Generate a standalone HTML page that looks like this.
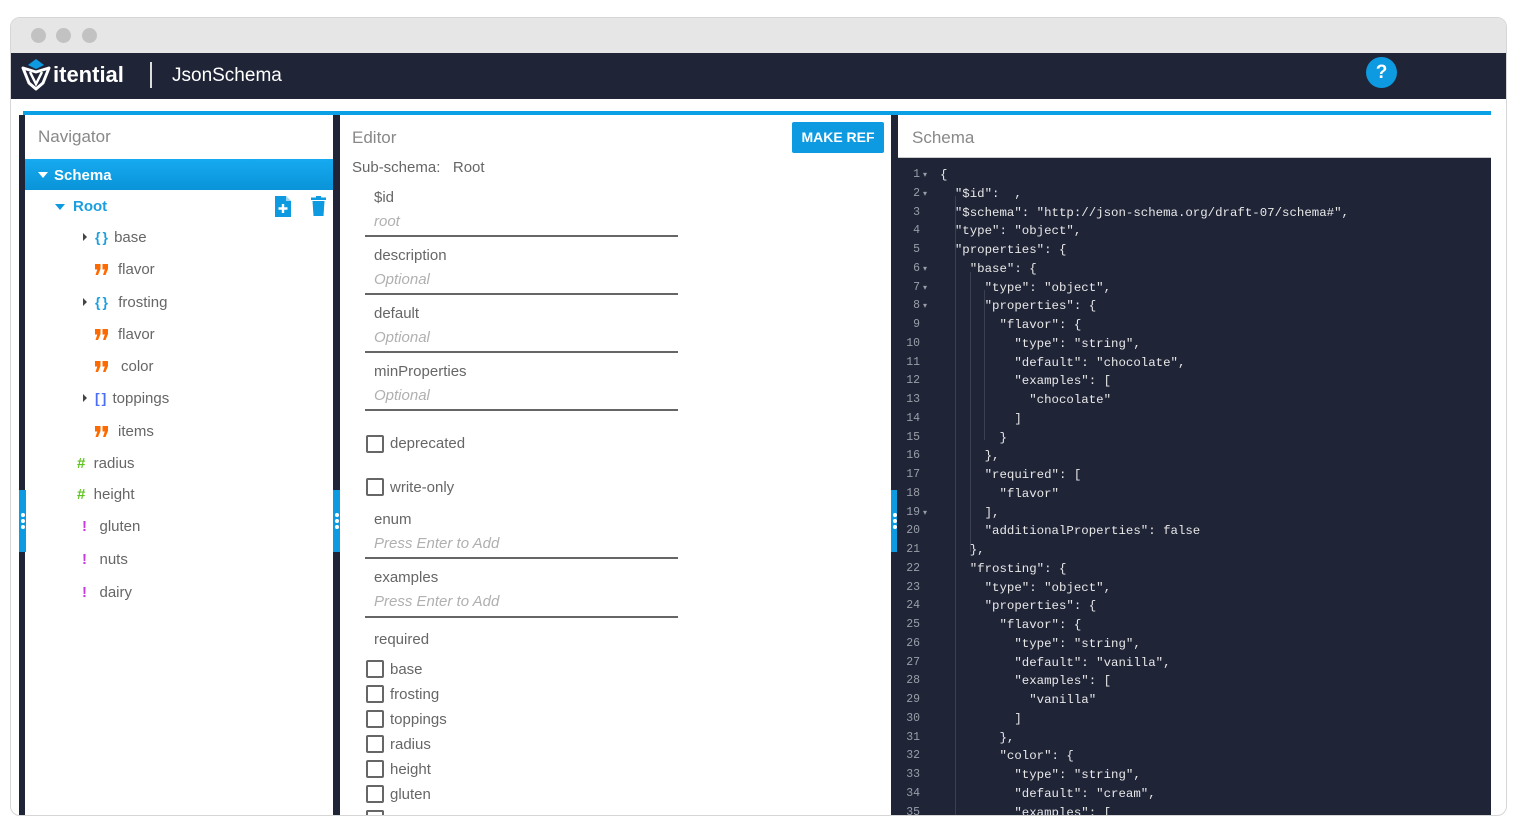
<!DOCTYPE html>
<html><head><meta charset="utf-8"><style>
*{margin:0;padding:0;box-sizing:border-box}
body{width:1536px;height:829px;background:#fff;position:relative;overflow:hidden;font-family:"Liberation Sans",sans-serif;color:#555}
.a{position:absolute}
.win{left:10px;top:17px;width:1497px;height:799px;border:1px solid #d6d6d6;border-radius:10px;background:#fff;overflow:hidden}
.tb{left:0;top:0;width:100%;height:35px;background:#e6e6e6}
.dot{width:15px;height:15px;border-radius:50%;background:#c2c2c2;top:10px}
.hd{left:0;top:35px;width:100%;height:46px;background:#1f2437}
.it{position:absolute;font-size:15px;color:#666;white-space:nowrap}
.br{color:#1a9fe0;font-weight:bold;font-size:14px;letter-spacing:2px}
.tri{display:inline-block;width:0;height:0;border-left:4px solid #444;border-top:4px solid transparent;border-bottom:4px solid transparent;margin-right:8px;vertical-align:1px}
.qi{position:absolute;left:95px;width:14px;height:11px}
.lbl{position:absolute;left:374px;font-size:15px;color:#666}
.ph{position:absolute;left:374px;font-size:15px;color:#b0b0b0;font-style:italic}
.ul{position:absolute;left:365px;width:313px;height:2px;background:#666}
.cb{position:absolute;left:366px;width:18px;height:18px;border:2px solid #666;border-radius:2px}
.cl{position:absolute;left:390px;font-size:15px;color:#666}
pre{font-family:"Liberation Mono",monospace;font-size:12.4px;line-height:18.75px;color:#e8e8e8;white-space:pre}
.ln{font-family:"Liberation Mono",monospace;font-size:11.5px;line-height:18.75px;color:#9a9ea8;text-align:right;white-space:pre}
.grip{width:7px;height:62px;background:#0d9ae0}
.grip i{position:absolute;left:1.5px;width:4px;height:4px;border-radius:50%;background:#fff}
</style></head><body>
<svg width="0" height="0" style="position:absolute"><defs><symbol id="q" viewBox="0 0 14 11"><path d="M0 0 H5.5 V5 L3 11 H0.5 L2.3 5.5 H0 Z M7.5 0 H13 V5 L10.5 11 H8 L9.8 5.5 H7.5 Z" fill="#ff6a00"/></symbol></defs></svg>
<div class="a win">
 <div class="a tb"></div>
 <div class="a dot" style="left:20px"></div><div class="a dot" style="left:45px"></div><div class="a dot" style="left:71px"></div>
 <div class="a hd"></div>
</div>
<svg class="a" style="left:20px;top:57px" width="32" height="34" viewBox="0 0 32 34">
<path d="M8 8 L16 2 L24 8 L16 12 Z" fill="#0d9ae0"/>
<path d="M3 11 L9 26 L16 32 L23 26 L29 11 L16 15 Z" fill="none" stroke="#fff" stroke-width="3" stroke-linejoin="round"/>
<path d="M10 15 L16 27 L22 15" fill="none" stroke="#fff" stroke-width="2.5"/>
</svg>
<div class="a" style="left:53px;top:62px;font-size:22px;font-weight:bold;color:#fff">itential</div>
<div class="a" style="left:150px;top:62px;width:2px;height:26px;background:#ddd"></div>
<div class="a" style="left:172px;top:65px;font-size:19px;color:#fff">JsonSchema</div>
<div class="a" style="left:1366px;top:57px;width:31px;height:31px;border-radius:50%;background:#0d9ae0;color:#fff;font-size:19px;text-align:center;line-height:31px;font-weight:bold">?</div>

<div class="a" style="left:23px;top:111px;width:1468px;height:4px;background:#0aa0e6"></div>
<div class="a" style="left:19px;top:115px;width:1472px;height:700px;background:#1f2437"></div>
<div class="a" style="left:25px;top:115px;width:308px;height:700px;background:#fff"></div>
<div class="a grip" style="left:19px;top:490px"><i style="top:23px"></i><i style="top:29px"></i><i style="top:35px"></i></div>
<div class="a grip" style="left:333px;top:490px"><i style="top:23px"></i><i style="top:29px"></i><i style="top:35px"></i></div>
<div class="a grip" style="left:891px;top:490px;width:6px"><i style="top:23px"></i><i style="top:29px"></i><i style="top:35px"></i></div>
<div class="a" style="left:38px;top:127px;font-size:17px;color:#888">Navigator</div>
<div class="a" style="left:25px;top:159px;width:308px;height:31px;background:linear-gradient(#16aaf0,#0a93d8)"></div>
<div class="a" style="left:38px;top:172px;width:0;height:0;border-top:6px solid #fff;border-left:5px solid transparent;border-right:5px solid transparent"></div>
<div class="a" style="left:54px;top:167px;font-size:15px;font-weight:bold;color:#fff">Schema</div>
<div class="a" style="left:55px;top:204px;width:0;height:0;border-top:6px solid #0d9ae0;border-left:5px solid transparent;border-right:5px solid transparent"></div>
<div class="a" style="left:73px;top:198px;font-size:15px;font-weight:bold;color:#1a9fe0">Root</div>
<svg class="a" style="left:274px;top:196px" width="18" height="21" viewBox="0 0 18 21"><path d="M1 0 H12 L17 5 V21 H1 Z" fill="#0d9ae0"/><path d="M12 0 V5 H17" fill="#fff" opacity=".6"/><path d="M9 8 V17 M4.5 12.5 H13.5" stroke="#fff" stroke-width="2.4"/></svg>
<svg class="a" style="left:311px;top:196px" width="15" height="20" viewBox="0 0 15 20"><rect x="0" y="1.5" width="15" height="2.5" fill="#0d9ae0"/><rect x="5" y="0" width="5" height="2" fill="#0d9ae0"/><path d="M1.5 5 H13.5 L12.5 20 H2.5 Z" fill="#0d9ae0"/></svg>

<div class="it" style="left:83px;top:229px"><span class="tri"></span><span class="br">{}</span> base</div>
<svg class="qi" style="top:264px"><use href="#q"/></svg><div class="it" style="left:118px;top:261px">flavor</div>
<div class="it" style="left:83px;top:294px"><span class="tri"></span><span class="br">{}</span>&nbsp; frosting</div>
<svg class="qi" style="top:329px"><use href="#q"/></svg><div class="it" style="left:118px;top:326px">flavor</div>
<svg class="qi" style="top:361px"><use href="#q"/></svg><div class="it" style="left:121px;top:358px">color</div>
<div class="it" style="left:83px;top:390px"><span class="tri"></span><span class="br" style="color:#4c6ef5">[]</span>&nbsp;toppings</div>
<svg class="qi" style="top:426px"><use href="#q"/></svg><div class="it" style="left:118px;top:423px">items</div>
<div class="it" style="left:77px;top:455px"><b style="color:#5fc31f">#</b>&nbsp; radius</div>
<div class="it" style="left:77px;top:486px"><b style="color:#5fc31f">#</b>&nbsp; height</div>
<div class="it" style="left:82px;top:518px"><b style="color:#c43ce0">!</b>&nbsp;&nbsp; gluten</div>
<div class="it" style="left:82px;top:551px"><b style="color:#c43ce0">!</b>&nbsp;&nbsp; nuts</div>
<div class="it" style="left:82px;top:584px"><b style="color:#c43ce0">!</b>&nbsp;&nbsp; dairy</div>

<div class="a" style="left:340px;top:115px;width:551px;height:700px;background:#fff"></div>
<div class="a" style="left:352px;top:128px;font-size:17px;color:#888">Editor</div>
<div class="a" style="left:792px;top:122px;width:92px;height:31px;background:#0d9ae0;border-radius:2px;color:#fff;font-size:14px;font-weight:bold;text-align:center;line-height:31px">MAKE REF</div>
<div class="a" style="left:352px;top:159px;font-size:15px;color:#666">Sub-schema:&nbsp;&nbsp; Root</div>
<div class="lbl" style="top:189px">$id</div><div class="ph" style="top:213px">root</div><div class="ul" style="top:235px"></div>
<div class="lbl" style="top:247px">description</div><div class="ph" style="top:271px">Optional</div><div class="ul" style="top:293px"></div>
<div class="lbl" style="top:305px">default</div><div class="ph" style="top:329px">Optional</div><div class="ul" style="top:351px"></div>
<div class="lbl" style="top:363px">minProperties</div><div class="ph" style="top:387px">Optional</div><div class="ul" style="top:409px"></div>
<div class="cb" style="top:435px"></div><div class="cl" style="top:435px">deprecated</div>
<div class="cb" style="top:478px"></div><div class="cl" style="top:479px">write-only</div>
<div class="lbl" style="top:511px">enum</div><div class="ph" style="top:535px">Press Enter to Add</div><div class="ul" style="top:557px"></div>
<div class="lbl" style="top:569px">examples</div><div class="ph" style="top:593px">Press Enter to Add</div><div class="ul" style="top:616px"></div>
<div class="lbl" style="top:631px">required</div>
<div class="cb" style="top:660px"></div><div class="cl" style="top:661px">base</div>
<div class="cb" style="top:685px"></div><div class="cl" style="top:686px">frosting</div>
<div class="cb" style="top:710px"></div><div class="cl" style="top:711px">toppings</div>
<div class="cb" style="top:735px"></div><div class="cl" style="top:736px">radius</div>
<div class="cb" style="top:760px"></div><div class="cl" style="top:761px">height</div>
<div class="cb" style="top:785px"></div><div class="cl" style="top:786px">gluten</div>
<div class="cb" style="top:810px;height:5px;border-bottom:none;border-radius:2px 2px 0 0"></div>

<div class="a" style="left:898px;top:115px;width:593px;height:43px;background:#fff;border-bottom:1px solid #ccc"></div>
<div class="a" style="left:912px;top:128px;font-size:17px;color:#888">Schema</div>
<div class="a" style="left:898px;top:158px;width:593px;height:657px;background:#1f2437;overflow:hidden">
<div class="a ln" style="left:0;top:8px;width:22px">1
2
3
4
5
6
7
8
9
10
11
12
13
14
15
16
17
18
19
20
21
22
23
24
25
26
27
28
29
30
31
32
33
34
35</div>
<div class="a" style="left:25px;top:8px;font-size:8px;line-height:18.75px;color:#9a9ea8;white-space:pre">▾
▾



▾
▾
▾










▾</div>
<div class="a" style="left:57px;top:38px;width:1px;height:620px;background:#3a3f52"></div>
<div class="a" style="left:72px;top:114px;width:1px;height:280px;background:#3a3f52"></div>
<div class="a" style="left:86px;top:132px;width:1px;height:150px;background:#3a3f52"></div>
<pre class="a" style="left:42px;top:8px">{
  "$id":  ,
  "$schema": "http://json-schema.org/draft-07/schema#",
  "type": "object",
  "properties": {
    "base": {
      "type": "object",
      "properties": {
        "flavor": {
          "type": "string",
          "default": "chocolate",
          "examples": [
            "chocolate"
          ]
        }
      },
      "required": [
        "flavor"
      ],
      "additionalProperties": false
    },
    "frosting": {
      "type": "object",
      "properties": {
        "flavor": {
          "type": "string",
          "default": "vanilla",
          "examples": [
            "vanilla"
          ]
        },
        "color": {
          "type": "string",
          "default": "cream",
          "examples": [</pre>
</div>
</body></html>
